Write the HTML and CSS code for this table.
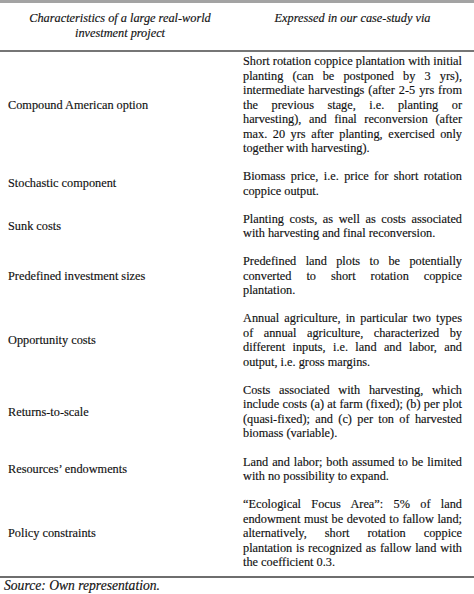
FILE: index.html
```html
<!DOCTYPE html>
<html>
<head>
<meta charset="utf-8">
<link rel="stylesheet" href="styles.css">
</head>
<body>
<div class="page">
  <div class="rule-top"></div>
  <div class="row head">
    <div class="c1">Characteristics of a large real-world<br>investment project</div>
    <div class="c2">Expressed in our case-study via</div>
  </div>
  <div class="rule-mid"></div>
  <div class="rows">
    <div class="row r1">
      <div class="c1">Compound American option</div>
      <div class="c2">
        <span class="j">Short rotation coppice plantation with initial</span>
        <span class="j">planting (can be postponed by 3 yrs),</span>
        <span class="j">intermediate harvestings (after 2-5 yrs from</span>
        <span class="j">the previous stage, i.e. planting or</span>
        <span class="j">harvesting), and final reconversion (after</span>
        <span class="j">max. 20 yrs after planting, exercised only</span>
        <span class="l">together with harvesting).</span>
      </div>
    </div>
    <div class="row r2">
      <div class="c1">Stochastic component</div>
      <div class="c2">
        <span class="j">Biomass price, i.e. price for short rotation</span>
        <span class="l">coppice output.</span>
      </div>
    </div>
    <div class="row r3">
      <div class="c1">Sunk costs</div>
      <div class="c2">
        <span class="j">Planting costs, as well as costs associated</span>
        <span class="l">with harvesting and final reconversion.</span>
      </div>
    </div>
    <div class="row r4">
      <div class="c1">Predefined investment sizes</div>
      <div class="c2">
        <span class="j">Predefined land plots to be potentially</span>
        <span class="j">converted to short rotation coppice</span>
        <span class="l">plantation.</span>
      </div>
    </div>
    <div class="row r5">
      <div class="c1">Opportunity costs</div>
      <div class="c2">
        <span class="j">Annual agriculture, in particular two types</span>
        <span class="j">of annual agriculture, characterized by</span>
        <span class="j">different inputs, i.e. land and labor, and</span>
        <span class="l">output, i.e. gross margins.</span>
      </div>
    </div>
    <div class="row r6">
      <div class="c1">Returns-to-scale</div>
      <div class="c2">
        <span class="j">Costs associated with harvesting, which</span>
        <span class="j">include costs (a) at farm (fixed); (b) per plot</span>
        <span class="j">(quasi-fixed); and (c) per ton of harvested</span>
        <span class="l">biomass (variable).</span>
      </div>
    </div>
    <div class="row r7">
      <div class="c1">Resources’ endowments</div>
      <div class="c2">
        <span class="j">Land and labor; both assumed to be limited</span>
        <span class="l">with no possibility to expand.</span>
      </div>
    </div>
    <div class="row r8">
      <div class="c1">Policy constraints</div>
      <div class="c2">
        <span class="j">“Ecological Focus Area”: 5% of land</span>
        <span class="j">endowment must be devoted to fallow land;</span>
        <span class="j">alternatively, short rotation coppice</span>
        <span class="j">plantation is recognized as fallow land with</span>
        <span class="l">the coefficient 0.3.</span>
      </div>
    </div>
  </div>
  <div class="rule-bottom"></div>
  <div class="source">Source: Own representation.</div>
</div>
</body>
</html>
```

FILE: styles.css
```css
html, body {
  margin: 0;
  padding: 0;
  background: #ffffff;
}

.page {
  width: 474px;
  font-family: "Liberation Serif", "Times New Roman", serif;
  font-size: 12.3px;
  line-height: 14.5px;
  color: #111111;
  -webkit-text-stroke: 0.15px #111111;
}

.rule-top {
  height: 3px;
  background: #a3a3a3;
}

.rule-mid {
  height: 2px;
  background: #767676;
}

.rule-bottom {
  height: 2px;
  background: #6e6e6e;
}

.row {
  display: grid;
  grid-template-columns: 243px 219px;
}

.row .c1 {
  padding-left: 8px;
  padding-right: 11px;
  align-self: center;
}

.head {
  padding: 8px 0 10px;
  font-style: italic;
}

.head .c1,
.head .c2 {
  text-align: center;
}

.rows .row {
  padding: 7px 0 6.6px;
}

.rows .r1 {
  padding-top: 2px;
}

.c2 .j,
.c2 .l {
  display: block;
  white-space: nowrap;
}

.c2 .j {
  text-align: justify;
  text-align-last: justify;
}

.source {
  font-style: italic;
  font-size: 13.6px;
  padding-left: 4px;
  line-height: 15px;
}
```
